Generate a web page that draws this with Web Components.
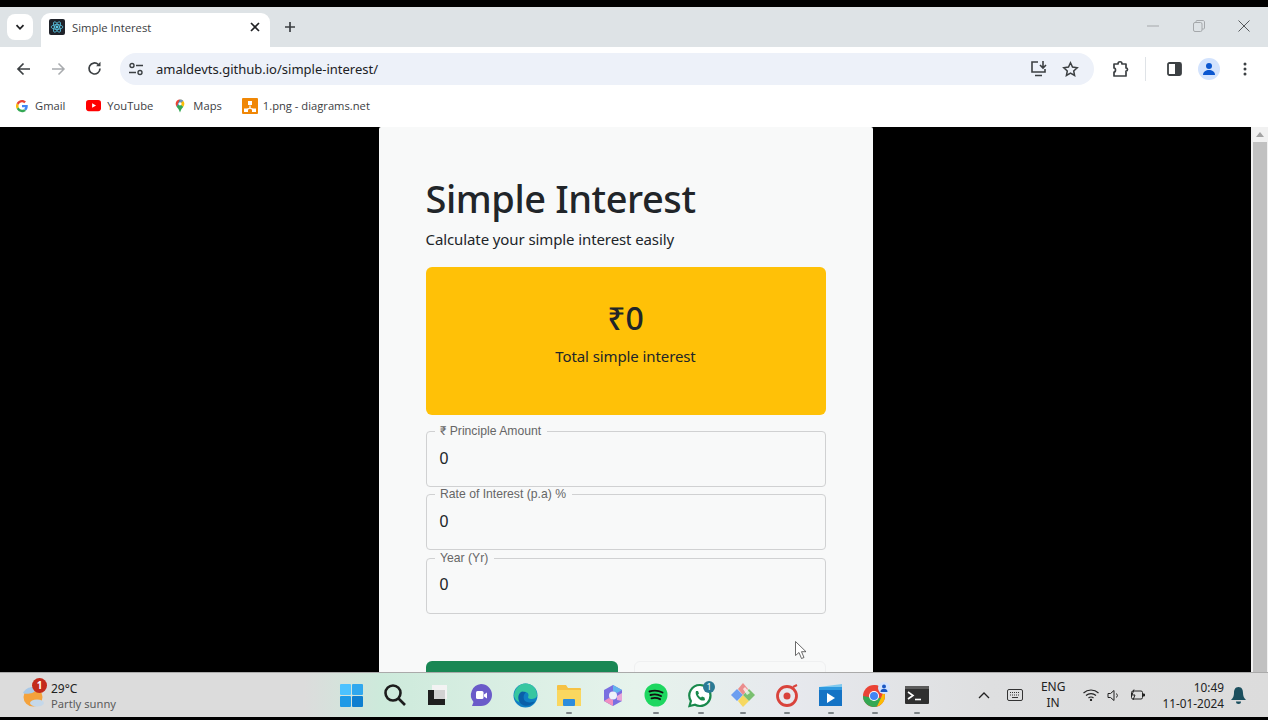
<!DOCTYPE html>
<html>
<head>
<meta charset="utf-8">
<title>Simple Interest</title>
<style>
html, body { margin: 0; height: 720px; overflow: hidden; background: #000; }
body { display: flex; flex-direction: column; font-family: "Open Sans", "Liberation Sans", sans-serif; }
</style>
</head>
<body>
<tab-strip></tab-strip>
<tool-bar></tool-bar>
<bookmark-bar>
  <book-mark label="Gmail"><svg viewBox="0 0 16 16" width="14" height="14"><path d="M14.6 8.2c0-.5 0-.9-.1-1.3H8v2.5h3.7c-.2.9-.6 1.6-1.4 2.1l2.2 1.7c1.3-1.2 2.1-3 2.1-5z" fill="#4285f4"/><path d="M8 15c1.9 0 3.4-.6 4.5-1.7l-2.2-1.7c-.6.4-1.4.7-2.3.7-1.8 0-3.3-1.2-3.8-2.8L1.9 11.2C3 13.5 5.300 15 8 15z" fill="#34a853"/><path d="M4.200 9.500c-.3-.9-.3-1.900 0-2.900L1.900 4.800c-1 1.900-1 4.400 0 6.400z" fill="#fbbc05"/><path d="M8 3.800c1 0 1.900.3 2.600 1l1.900-1.900C11.400 1.800 9.800 1 8 1 5.300 1 3 2.500 1.900 4.800l2.300 1.800C4.700 5 6.200 3.800 8 3.800z" fill="#ea4335"/></svg></book-mark>
  <book-mark label="YouTube" style="gap:5px"><svg viewBox="0 0 16 16" width="17" height="15"><rect x="0" y="2" width="16" height="12" rx="3" fill="#f00"/><path d="M6.500 5.500v5l4.200-2.500z" fill="#fff"/></svg></book-mark>
  <book-mark label="Maps"><svg viewBox="0 0 16 16" width="14" height="16"><path d="M8 .5c-2.900 0-5 2.200-5 5 0 1.300.5 2.300 1.200 3.300L8 5.500z" fill="#ea4335"/><path d="M8 .5L4.200 8.800C5.600 10.600 7 12 8 15.500c1-3.500 2.400-4.900 3.800-6.700L8 5.500z" fill="#34a853"/><path d="M8 .5v5l3.800 3.300c.7-1 1.200-2 1.200-3.300 0-2.800-2.100-5-5-5z" fill="#fbbc05"/><path d="M4.200 8.800L8 5.500l3.800-3.400C10.900 1.100 9.500.5 8 .5" fill="#4285f4" opacity=".75"/><circle cx="8" cy="5.500" r="1.800" fill="#fff"/></svg></book-mark>
  <book-mark label="1.png - diagrams.net" style="gap:5px"><svg viewBox="0 0 16 16" width="16" height="16"><rect width="16" height="16" rx="1" fill="#f08705"/><path d="M8 7.500v2.500M8 10L4 12M8 10l4 2" stroke="#fff" stroke-width="1.200" fill="none"/><rect x="6" y="3" width="4" height="4" fill="#fff"/><rect x="2" y="10.500" width="4" height="3.500" fill="#fff"/><rect x="10" y="10.500" width="4" height="3.500" fill="#fff"/></svg></book-mark>
</bookmark-bar>
<page-view>
  <interest-card>
    <outlined-field label="₹ Principle Amount" value="0"></outlined-field>
    <outlined-field label="Rate of Interest (p.a) %" value="0"></outlined-field>
    <outlined-field label="Year (Yr)" value="0"></outlined-field>
  </interest-card>
</page-view>
<task-bar></task-bar>

<script>
class TabStrip extends HTMLElement {
  constructor() {
    super();
    this.attachShadow({ mode: 'open' }).innerHTML = `
    <style>
      :host { display: flex; align-items: flex-end; height: 40px; margin-top: 7px; background: #dee3e6; padding-left: 7px; color: #3c4043; flex: none; }
      .menu { width: 26px; height: 26px; margin: 0 8px 7px 0; background: #fff; border-radius: 8px; display: grid; place-items: center; }
      .tab { width: 229px; height: 34px; background: #fff; border-radius: 9px 9px 0 0; display: flex; align-items: center; padding: 0 10px 6px 8px; box-sizing: border-box; font-size: 11.300px; gap: 7px; }
      .tab span { flex: 1; }
      .fav { width: 16px; height: 16px; background: #20232a; border-radius: 2px; display: grid; place-items: center; }
      .plus { margin: 0 0 14px 14px; display: grid; }
      .win { margin-left: auto; display: flex; align-items: center; align-self: stretch; gap: 33.500px; padding: 0 18px 2px 0; }
    </style>
    <div class="menu"><svg width="10" height="10" viewBox="0 0 10 10"><path d="M1.500 3.200L5 6.800l3.500-3.600" fill="none" stroke="#202124" stroke-width="1.800"/></svg></div>
    <div class="tab">
      <div class="fav"><svg width="14" height="14" viewBox="-12 -12 24 24" fill="none" stroke="#61dafb" stroke-width="1.200"><ellipse rx="10" ry="4"/><ellipse rx="10" ry="4" transform="rotate(60)"/><ellipse rx="10" ry="4" transform="rotate(120)"/><circle r="1.800" fill="#61dafb"/></svg></div>
      <span>Simple Interest</span>
      <svg width="10" height="10" viewBox="0 0 10 10"><path d="M1 1l8 8M9 1l-8 8" stroke="#202124" stroke-width="1.700"/></svg>
    </div>
    <div class="plus"><svg width="12" height="12" viewBox="0 0 12 12"><path d="M6 1v10M1 6h10" stroke="#3c4043" stroke-width="1.700"/></svg></div>
    <div class="win">
      <svg width="12" height="12" viewBox="0 0 12 12"><path d="M0 6h12" stroke="#a5a8ab"/></svg>
      <svg width="12" height="12" viewBox="0 0 12 12" fill="none" stroke="#a5a8ab"><rect x=".5" y="2.500" width="8.500" height="9" rx="1.500"/><path d="M3 2.500V1.500c0-.6.4-1 1-1h6c.8 0 1.500.7 1.500 1.500v6c0 .6-.4 1-1 1H9"/></svg>
      <svg width="12" height="12" viewBox="0 0 12 12"><path d="M.5.500l11 11M11.500.500l-11 11" stroke="#55585b"/></svg>
    </div>`;
  }
}
customElements.define('tab-strip', TabStrip);

class ToolBar extends HTMLElement {
  constructor() {
    super();
    this.attachShadow({ mode: 'open' }).innerHTML = `
    <style>
      :host { display: flex; align-items: center; height: 43px; background: #fff; flex: none; padding-left: 16px; box-sizing: border-box; }
      .nav { display: flex; gap: 20px; align-items: center; margin-right: 18px; }
      .omni { width: 974px; height: 32px; border-radius: 16px; background: #edf1f9; display: flex; align-items: center; padding: 0 15px 0 8px; box-sizing: border-box; font-size: 13px; color: #202124; }
      .omni .url { flex: 1; margin-left: 12px; font-family: "Noto Sans", "Open Sans", sans-serif; }
      .omni svg + svg { margin-left: 14px; }
      .ext { margin-left: 18px; }
      .sep { width: 1px; height: 24px; background: #dfe3e7; margin: 0 21px 0 15px; }
      .avatar { margin-left: 16px; width: 22px; height: 22px; border-radius: 50%; background: #d3e3fd; display: grid; place-items: center; }
      .dots { margin-left: 23px; }
    </style>
    <div class="nav">
      <svg width="15" height="14" viewBox="0 0 15 14"><path d="M14 7H2M7.500 1.500L2 7l5.500 5.500" fill="none" stroke="#3c4043" stroke-width="1.700"/></svg>
      <svg width="15" height="14" viewBox="0 0 15 14"><path d="M1 7h12M7.500 1.500L13 7l-5.500 5.500" fill="none" stroke="#a8abae" stroke-width="1.500"/></svg>
      <svg width="15" height="15" viewBox="0 0 15 15" style="margin-left:1px"><path d="M13 7.500a5.500 5.500 0 1 1-1.700-4" fill="none" stroke="#3c4043" stroke-width="1.700"/><path d="M13.500 .8v4.400H9.100z" fill="#3c4043"/></svg>
    </div>
    <div class="omni">
      <svg width="16" height="14" viewBox="0 0 16 14" fill="none" stroke="#3c4043" stroke-width="1.400"><circle cx="4" cy="3.500" r="2"/><path d="M8 3.500h7M1 10.500h7"/><circle cx="12" cy="10.500" r="2"/></svg>
      <span class="url">amaldevts.github.io/simple-interest/</span>
      <svg width="18" height="17" viewBox="0 0 18 17" fill="none" stroke="#3c4043" stroke-width="1.600"><path d="M8 2H2v10h13V9M5 15.500h7"/><path d="M13 1v6.500M10 5l3 3 3-3"/></svg>
      <svg width="17" height="16" viewBox="0 0 17 16" fill="none" stroke="#3c4043" stroke-width="1.500"><path d="M8.500 1.800l2 4.300 4.700.6-3.500 3.200.9 4.600-4.100-2.300-4.100 2.300.9-4.600L1.800 6.700l4.700-.6z"/></svg>
    </div>
    <svg class="ext" width="18" height="18" viewBox="0 0 18 18" fill="none" stroke="#3c4043" stroke-width="1.700"><path d="M2 4h4c0-3 4-3 4 0h4v4c2 0 2 3 0 3v5H2v-4c2 0 2-4 0-4z" stroke-linejoin="round"/></svg>
    <div class="sep"></div>
    <svg width="15" height="14" viewBox="0 0 15 14"><rect x="1" y="1" width="13" height="12" rx="1.500" fill="none" stroke="#3c4043" stroke-width="1.800"/><rect x="8" y="1" width="6" height="12" fill="#3c4043"/></svg>
    <div class="avatar"><svg width="14" height="14" viewBox="0 0 14 14" fill="#0b57d0"><circle cx="7" cy="4" r="3"/><path d="M1 13c0-3.500 3-5 6-5s6 1.500 6 5z"/></svg></div>
    <svg class="dots" width="4" height="14" viewBox="0 0 4 14" fill="#3c4043"><circle cx="2" cy="2" r="1.500"/><circle cx="2" cy="7" r="1.500"/><circle cx="2" cy="12" r="1.500"/></svg>`;
  }
}
customElements.define('tool-bar', ToolBar);

class BookmarkBar extends HTMLElement {
  constructor() {
    super();
    this.attachShadow({ mode: 'open' }).innerHTML = `
    <style>
      :host { display: flex; align-items: center; gap: 20px; height: 37px; background: #fff; padding: 0 0 6px 15px; box-sizing: border-box; flex: none; }
    </style>
    <slot></slot>`;
  }
}
customElements.define('bookmark-bar', BookmarkBar);

class BookMark extends HTMLElement {
  constructor() {
    super();
    this.attachShadow({ mode: 'open' }).innerHTML = `
    <style>
      :host { display: flex; align-items: center; gap: 6px; font-size: 11.200px; color: #3c4043; }
      ::slotted(svg) { flex: none; }
    </style>
    <slot></slot><span>${this.getAttribute('label')}</span>`;
  }
}
customElements.define('book-mark', BookMark);

class PageView extends HTMLElement {
  constructor() {
    super();
    this.attachShadow({ mode: 'open' }).innerHTML = `
    <style>
      :host { display: flex; flex: 1; min-height: 0; background: #000; overflow: hidden; }
      .main { flex: 1; display: flex; justify-content: center; overflow: hidden; }
      .bar { width: 17px; background: #f1f1f1; display: flex; flex-direction: column; align-items: center; box-sizing: border-box; padding-top: 5px; }
      .thumb { width: 14px; flex: 1; margin-top: 5px; background: #c1c1c1; }
      .arrow { width: 0; height: 0; border: 4px solid transparent; border-top: 0; border-bottom: 5px solid #a3a3a3; }
    </style>
    <div class="main"><slot></slot></div>
    <div class="bar"><div class="arrow"></div><div class="thumb"></div></div>`;
  }
}
customElements.define('page-view', PageView);

class InterestCard extends HTMLElement {
  constructor() {
    super();
    this.attachShadow({ mode: 'open' }).innerHTML = `
    <style>
      :host { display: block; width: 494px; height: 600px; flex: none; background: #f8f9f9; padding: 47px 47px 0; box-sizing: border-box; color: #212529; font-family: "Noto Sans", "Open Sans", sans-serif; border-radius: 2px 2px 0 0; }
      h1 { margin: 0; font-size: 38px; font-weight: 500; line-height: 48px; letter-spacing: -.43px; }
      p { margin: 5px 0 0; font-size: 15px; line-height: 24px; letter-spacing: -.1px; }
      .result { height: 148px; margin-top: 16px; background: #ffc107; border-radius: 6px; text-align: center; padding-top: 30px; box-sizing: border-box; }
      .result b { display: block; font-size: 32px; font-weight: 500; line-height: 42px; }
      .result span { display: block; font-size: 15px; line-height: 24px; margin-top: 5px; letter-spacing: -.1px; }
      .fields { display: flex; flex-direction: column; gap: 7.250px; margin-top: 16px; }
      .actions { display: grid; grid-template-columns: 1fr 1fr; gap: 16px; margin-top: 47.500px; }
      .btn { height: 56px; border-radius: 6px; }
      .go { background: #198754; }
      .clear { background: #f8f9f9; border: 1px solid #eff0f1; box-sizing: border-box; }
    </style>
    <h1>Simple Interest</h1>
    <p>Calculate your simple interest easily</p>
    <div class="result"><b>₹0</b><span>Total simple interest</span></div>
    <div class="fields"><slot></slot></div>
    <div class="actions"><div class="btn go"></div><div class="btn clear"></div></div>`;
  }
}
customElements.define('interest-card', InterestCard);

class OutlinedField extends HTMLElement {
  constructor() {
    super();
    this.attachShadow({ mode: 'open' }).innerHTML = `
    <style>
      :host { display: block; height: 56px; position: relative; font-family: "Liberation Sans", "Roboto", sans-serif; }
      fieldset { position: absolute; inset: -5px 0 0; margin: 0; padding: 0 8px; border: 1px solid #d0d1d2; border-radius: 4px; }
      legend { padding: 0 5.500px; font-size: 12.200px; line-height: 11px; height: 11px; color: #666; white-space: nowrap; }
      .val { display: flex; align-items: center; height: 55px; padding-left: 14px; font-size: 16px; color: #212529; position: relative; }
    </style>
    <fieldset><legend>${this.getAttribute('label')}</legend></fieldset>
    <div class="val">${this.getAttribute('value')}</div>`;
  }
}
customElements.define('outlined-field', OutlinedField);

class TaskBar extends HTMLElement {
  constructor() {
    super();
    this.attachShadow({ mode: 'open' }).innerHTML = `
    <style>
      :host { display: flex; align-items: center; position: relative; height: 45px; margin-bottom: 3px; flex: none; background: linear-gradient(90deg, #dcdcdc 0 24%, #cdeadb 30%, #e6f3ec 50%, #e7e9ee 62%, #dedfe0 78%, #dcdcdc); color: #222; font-family: "Noto Sans", "Open Sans", sans-serif; font-size: 12px; border-top: 1px solid #aaa; box-sizing: border-box; }
      .weather { display: flex; align-items: center; gap: 5px; width: 337px; padding: 2px 0 0 21px; box-sizing: border-box; position: relative; line-height: 16px; flex: none; }
      .weather small { display: block; font-size: 11.200px; color: #5b5b5b; margin-top: -1px; }
      .badge { position: absolute; left: 32px; top: -1px; width: 15px; height: 15px; border-radius: 50%; background: #c42b1c; color: #fff; font-size: 10px; line-height: 15px; text-align: center; font-weight: 700; }
      .apps { display: flex; align-items: center; gap: 15.500px; height: 100%; flex: none; }
      .app { position: relative; width: 28px; height: 28px; display: grid; place-items: center; }
      .app.on::after { content: ""; position: absolute; bottom: -5px; left: 11px; width: 6px; height: 2px; border-radius: 1px; background: #7d8487; }
      .tray { margin-left: auto; display: flex; align-items: center; font-size: 12px; color: #222; }
      .lang { text-align: center; line-height: 16px; margin: 0 18px 0 0; }
      .clock { text-align: right; line-height: 16px; margin: 0 7px 0 16px; font-size: 11.800px; }
      .tray > svg { flex: none; }
    </style>
    <div class="weather">
      <svg width="25" height="25" viewBox="0 0 25 25"><circle cx="12" cy="13" r="9.500" fill="#f4a23c"/><path d="M2 9c2-4 6-6 10-6 2 0 3 2 2 4-1 2-8 4-12 2z" fill="#a9c9e8"/><ellipse cx="16" cy="19" rx="7" ry="3.500" fill="#c5d8ea"/></svg>
      <div><div>29°C</div><small>Partly sunny</small></div>
      <div class="badge">1</div>
    </div>
    <div class="apps">
      <div class="app"><svg width="25" height="25" viewBox="0 0 25 25"><rect x="1" y="1" width="11" height="11" rx="1" fill="#4cc2ff"/><rect x="13" y="1" width="11" height="11" rx="1" fill="#30a8ee"/><rect x="1" y="13" width="11" height="11" rx="1" fill="#1f9ae6"/><rect x="13" y="13" width="11" height="11" rx="1" fill="#0f7fd0"/></svg></div>
      <div class="app"><svg width="24" height="24" viewBox="0 0 24 24" fill="none" stroke="#1c1c1c" stroke-width="2.600"><circle cx="10" cy="10" r="7.500"/><path d="M15.500 15.500L22 22"/></svg></div>
      <div class="app"><svg width="20" height="20" viewBox="0 0 20 20" style="margin-left:-2px"><rect x="5" y="0" width="15" height="14" fill="#f3f3f3"/><rect x="1" y="5" width="17" height="15" fill="#d2d2d2"/><path d="M1 5h6v9h11v6H1z" fill="#1f1f1f"/></svg></div>
      <div class="app"><svg width="24" height="25" viewBox="0 0 24 25" style="margin-left:-1px"><path d="M12 1a11 11 0 0 1 0 22H3l1.500-4A11 11 0 0 1 12 1z" fill="#6a5bc9"/><rect x="7" y="8" width="7.500" height="8" rx="1.500" fill="#fff"/><path d="M15 11.500l3-2v6l-3-2z" fill="#fff"/></svg></div>
      <div class="app"><svg width="25" height="25" viewBox="0 0 25 25"><circle cx="12.500" cy="12.500" r="12" fill="#0f7fc4"/><path d="M1 12C2 5 7 .5 12.500.5c6 0 11.500 4.500 11.500 11.500 0 3-3 4-6 4-2 0-3-1-3-2 1-1 1-5-3-5-5 0-6 7-1 11C6 20 1 17 1 12z" fill="#37c6a0"/><path d="M9 8.500c-5 2-5 10 0 13 3 2 9 2 13-3-3 1-9 2-11-2-1-3 0-6 2-7.500z" fill="#0a5fa8"/></svg></div>
      <div class="app on"><svg width="26" height="24" viewBox="0 0 26 24"><path d="M1 3a1 1 0 0 1 1-1h8l2 3h12a1 1 0 0 1 1 1v16a1 1 0 0 1-1 1H2a1 1 0 0 1-1-1z" fill="#f6c244"/><path d="M1 7h24v15a1 1 0 0 1-1 1H2a1 1 0 0 1-1-1z" fill="#fad75f"/><rect x="7" y="16" width="12" height="7" rx="1" fill="#2c8ddc"/></svg></div>
      <div class="app"><svg width="22" height="23" viewBox="0 0 22 23" style="margin-left:1px"><path d="M11 1l9 5v11l-9 5-9-5V6z" fill="#7a6fe0"/><path d="M11 1l9 5-5 3-4-2z" fill="#63b5ee"/><path d="M2 17l9 5v-6l-4-2z" fill="#f08fc0"/><path d="M20 17V9l-5 3v4z" fill="#e8a5d8"/><circle cx="11" cy="11.500" r="4" fill="#eef2fb"/></svg></div>
      <div class="app on"><svg width="24" height="24" viewBox="0 0 24 24"><circle cx="12" cy="12" r="11.500" fill="#1ed760"/><path d="M5.500 8.500c4-1.200 9-1 13 1M6.500 12c3.500-1 7.500-.7 10.500 1M7.500 15.300c3-.8 6-.5 8.500.9" fill="none" stroke="#111" stroke-width="1.900" stroke-linecap="round"/></svg></div>
      <div class="app on" style="left:2px"><svg width="28" height="28" viewBox="0 0 28 28"><path d="M13 4a10.500 10.500 0 0 1 0 21c-2 0-3.500-.4-5-1.300L2.500 25l1.400-5A10.500 10.500 0 0 1 13 4z" fill="#fff" stroke="#19894c" stroke-width="2.200"/><path d="M9 10c-1 2 0 5 2.500 7.500S16.500 20 18 19l-.5-2.500-2.500-1-1 1c-1.500-.7-2.500-1.800-3-3l1-1-1-2.500z" fill="#19894c"/><circle cx="22" cy="6" r="6" fill="#2b7a94"/><text x="22" y="9" font-size="9" font-family="Noto Sans" text-anchor="middle" fill="#fff">1</text></svg></div>
      <div class="app on"><svg width="26" height="24" viewBox="0 0 26 24"><path d="M13 12L7 6 1 12l6 6z" fill="#6c9ef0"/><path d="M13 12l-5 6 5 6 6-6z" fill="#f6d860"/><path d="M13 12l6 6 6-6-6-6z" fill="#7ac070"/><path d="M13 12L8 6l5-6 5 6z" fill="#ea8d8d"/><path d="M15 4l5 6-3 2-4-6z" fill="#fff" opacity=".7"/></svg></div>
      <div class="app on" style="left:1px"><svg width="24" height="24" viewBox="0 0 24 24" fill="none"><circle cx="12" cy="13" r="9.500" stroke="#d9433c" stroke-width="2.800"/><circle cx="12" cy="13" r="3.500" fill="#d9433c"/><path d="M18 4l4-2" stroke="#d9433c" stroke-width="2"/></svg></div>
      <div class="app on" style="left:1px"><svg width="25" height="24" viewBox="0 0 25 24"><path d="M1 4l23-3v3z" fill="#7ec8ee"/><rect x="1" y="4" width="23" height="19" fill="#1573c5"/><path d="M1 4h23v3H1z" fill="#2f9ae0"/><path d="M9 10l8 5-8 5z" fill="#fff"/></svg></div>
      <div class="app on" style="left:2px"><svg width="30" height="28" viewBox="0 0 30 28"><circle cx="13" cy="15" r="11" fill="#ea4335"/><path d="M2 15a11 11 0 0 0 14 10.600L20.500 17H13z" fill="#34a853"/><path d="M13 4a11 11 0 0 1 9.700 6H13z" fill="#ea4335"/><path d="M22.700 10a11 11 0 0 1-6.700 15.600L20 17z" fill="#fbbc05"/><circle cx="13" cy="15" r="5" fill="#fff"/><circle cx="13" cy="15" r="4" fill="#4285f4"/><circle cx="23" cy="7" r="6" fill="#d3e3fd"/><circle cx="23" cy="5.500" r="2" fill="#1a57c4"/><path d="M19.500 11c0-2.500 1.500-3 3.500-3s3.500.5 3.500 3z" fill="#1a57c4"/></svg></div>
      <div class="app on"><svg width="24" height="18" viewBox="0 0 24 18"><rect width="24" height="18" rx="1" fill="#2f2f2f"/><rect width="24" height="3" fill="#5b5b5b"/><path d="M3 6l5 3.500L3 13" fill="none" stroke="#fff" stroke-width="1.600"/><path d="M10 13.500h6" stroke="#fff" stroke-width="1.600"/></svg></div>
    </div>
    <div class="tray">
      <svg width="12" height="8" viewBox="0 0 12 8" style="margin-right:17px"><path d="M1 7l5-5 5 5" fill="none" stroke="#222" stroke-width="1.300"/></svg>
      <svg width="16" height="12" viewBox="0 0 16 12" fill="none" stroke="#333" style="margin-right:18px"><rect x=".5" y=".5" width="15" height="11" rx="1.500"/><path d="M3 3.500h10M3 6h10" stroke-dasharray="1 1"/><path d="M5 8.500h6"/></svg>
      <div class="lang">ENG<br>IN</div>
      <svg width="16" height="12" viewBox="0 0 16 12" fill="none" stroke="#222" stroke-width="1.100" style="margin-right:8px"><path d="M.5 4a11 11 0 0 1 15 0M3 6.500a7.500 7.500 0 0 1 10 0M5.500 9a3.500 3.500 0 0 1 5 0"/><circle cx="8" cy="11" r=".6" fill="#222"/></svg>
      <svg width="14" height="13" viewBox="0 0 14 13" fill="none" stroke="#222" style="margin-right:8px"><path d="M1 4.500h2.500L7 1.500v10L3.500 8.500H1z"/><path d="M9.500 4.500a3 3 0 0 1 0 4"/></svg>
      <svg width="17" height="12" viewBox="0 0 17 12" fill="none" stroke="#222"><rect x="2.500" y="2" width="11" height="8" rx="1.500"/><path d="M14 5v2h1.500V5z" fill="#222"/><path d="M5 .5L3 6h3l-2 5" stroke-width="1"/></svg>
      <div class="clock">10:49<br>11-01-2024</div>
      <svg width="15" height="17" viewBox="0 0 15 17" fill="#1b4f5e" style="margin-right:22px"><path d="M7.500 0C4 0 3 3 3 6c0 3-1 5-3 7h15c-2-2-3-4-3-7 0-3-1-6-4.500-6z"/><path d="M5 14.500a2.500 2.500 0 0 0 5 0z"/></svg>
    </div>`;
  }
}
customElements.define('task-bar', TaskBar);

class MousePointer extends HTMLElement {
  constructor() {
    super();
    this.attachShadow({ mode: 'open' }).innerHTML = `
    <style>:host { display: block; position: fixed; left: 795px; top: 641px; width: 13px; height: 19px; }</style>
    <svg width="13" height="19" viewBox="0 0 13 19"><path d="M.5.500v14l3.500-3 2.500 6 2.500-1-2.500-5.800H11z" fill="#fff" stroke="#444" stroke-width=".8"/></svg>`;
  }
}
customElements.define('mouse-pointer', MousePointer);
document.body.appendChild(document.createElement('mouse-pointer'));
</script>
</body>
</html>
